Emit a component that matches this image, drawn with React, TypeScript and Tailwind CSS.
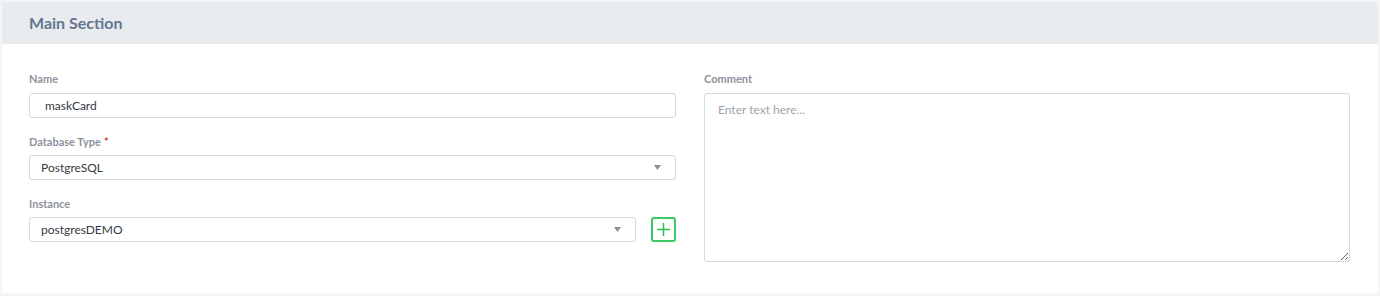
const Caret = () => (
  <svg width="7" height="5" viewBox="0 0 7 5">
    <path d="M0 0h7L3.5 5z" fill="#8a8f9e" />
  </svg>
);

const PlusIcon = () => (
  <svg width="15" height="15" viewBox="0 0 15 15">
    <path d="M7.5 1v13M1 7.5h13" stroke="#2dbf57" strokeWidth="1.5" fill="none" />
  </svg>
);

const Label = ({ text, required }: { text: string; required?: boolean }) => (
  <div className="h-[14px] pt-[1px] text-[11px] leading-[14px] font-bold text-[#8d939c]">
    {text}
    {required && <span className="ml-[3px] text-[#e53935]">*</span>}
  </div>
);

const SelectBox = ({ value }: { value: string }) => (
  <div className="flex h-[25px] flex-1 items-center justify-between rounded-[3px] border border-[#d3d9de] bg-white pl-[11px] pr-[14px] text-[12px] text-[#333b47]">
    <span>{value}</span>
    <Caret />
  </div>
);

export default function App() {
  return (
    <div className="h-[296px] w-[1380px] bg-[#f3f5f6] p-[2px] pb-[3px] font-['Lato',sans-serif]">
      <div className="h-full bg-white">
        {/* Header */}
        <div className="flex h-[42px] items-center bg-[#e8ecef] px-[27px]">
          <h2 className="text-[16px] font-bold text-[#66758f]">Main Section</h2>
        </div>

        {/* Body */}
        <div className="grid grid-cols-[647px_646px] gap-x-[28px] px-[27px] pt-[27px]">
          <div className="flex flex-col">
            <Label text="Name" />
            <div className="mt-[8px] flex h-[25px] items-center rounded-[3px] border border-[#d3d9de] bg-white pl-[15px] text-[12px] text-[#333b47]">
              maskCard
            </div>

            <div className="mt-[16px]">
              <Label text="Database Type" required />
            </div>
            <div className="mt-[7px] flex">
              <SelectBox value="PostgreSQL" />
            </div>

            <div className="mt-[16px]">
              <Label text="Instance" />
            </div>
            <div className="mt-[7px] flex items-center gap-[15px]">
              <SelectBox value="postgresDEMO" />
              <div className="flex h-[25px] w-[25px] items-center justify-center rounded-[3px] border-2 border-[#3cc864]">
                <PlusIcon />
              </div>
            </div>
          </div>

          <div className="flex flex-col">
            <Label text="Comment" />
            <textarea
              placeholder="Enter text here..."
              className="mt-[8px] h-[169px] resize-y rounded-[3px] border border-[#d3d9de] bg-white px-[13px] py-[7px] text-[12px] text-[#333b47] outline-none placeholder:text-[#9ea4ab]"
            />
          </div>
        </div>
      </div>
    </div>
  );
}
